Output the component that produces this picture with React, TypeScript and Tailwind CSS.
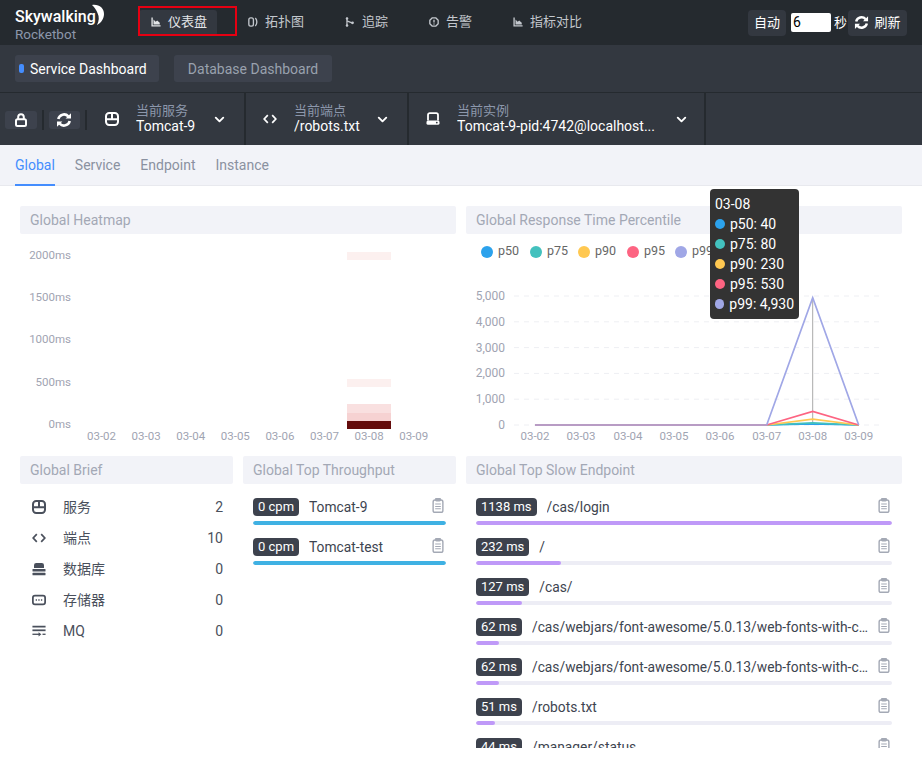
import { ReactNode } from 'react';
import { ChevronDown } from 'lucide-react';

type IconProps = { className?: string };

function ChartIcon({ className }: IconProps) {
  return (
    <svg viewBox="0 0 12 12" className={className} fill="currentColor">
      <path d="M0.5 0.5h1.6v9.4h9.4v1.6h-11z" />
      <path d="M3 3l2.6 2.6 1.8-1.3 3.100 2.500v2.200H3z" />
    </svg>
  );
}

function TopologyIcon({ className }: IconProps) {
  return (
    <svg viewBox="0 0 12 12" className={className} fill="none" stroke="currentColor" strokeWidth="1.6">
      <rect x="1" y="1" width="5.5" height="10" rx="2.2" />
      <path d="M8.8 1.200c2.400 2.500 2.400 7.100 0 9.600" />
    </svg>
  );
}

function TraceIcon({ className }: IconProps) {
  return (
    <svg viewBox="0 0 12 12" className={className} fill="currentColor">
      <path d="M1.600 1h1.500v10H1.600z" />
      <path d="M2.500 4l6 2.400-.5 1.300-6-2.400z" />
      <circle cx="2.400" cy="1.800" r="1.500" />
      <circle cx="2.400" cy="10.200" r="1.500" />
      <circle cx="9" cy="7" r="1.700" />
    </svg>
  );
}

function AlarmIcon({ className }: IconProps) {
  return (
    <svg viewBox="0 0 12 12" className={className} fill="none" stroke="currentColor" strokeWidth="1.6">
      <path d="M4 1h4l3 3v4l-3 3H4L1 8V4z" strokeLinejoin="round" />
      <path d="M6 3.200v3.400M6 7.700v1.200" />
    </svg>
  );
}

function ReloadIcon({ className }: IconProps) {
  return (
    <svg viewBox="0 0 16 16" className={className} fill="none" stroke="currentColor" strokeWidth="2.6">
      <path d="M2.300 7a5.800 5.800 0 0 1 10-2.600" />
      <path d="M13.700 9a5.800 5.800 0 0 1-10 2.600" />
      <path d="M15 1.200v5.400H9.600z" fill="currentColor" stroke="none" />
      <path d="M1 14.800V9.400h5.400z" fill="currentColor" stroke="none" />
    </svg>
  );
}

function LockIcon({ className }: IconProps) {
  return (
    <svg viewBox="0 0 12 14" className={className} fill="none" stroke="currentColor" strokeWidth="2">
      <path d="M3.200 6.500V4a2.800 2.800 0 0 1 5.600 0v2.500" />
      <rect x="1" y="6.200" width="10" height="6.800" rx="1.500" />
    </svg>
  );
}

function ServiceIcon({ className }: IconProps) {
  return (
    <svg viewBox="0 0 14 14" className={className} fill="none" stroke="currentColor" strokeWidth="2">
      <rect x="1" y="1" width="12" height="12" rx="3.200" />
      <path d="M1 7.200h12M7 1v6" />
    </svg>
  );
}

function EndpointIcon({ className }: IconProps) {
  return (
    <svg viewBox="0 0 14 14" className={className} fill="none" stroke="currentColor" strokeWidth="1.7">
      <path d="M4.800 3.200L1.200 7l3.600 3.800M9.200 3.200L12.800 7l-3.600 3.800" />
    </svg>
  );
}

function InstanceIcon({ className }: IconProps) {
  return (
    <svg viewBox="0 0 14 14" className={className} fill="none" stroke="currentColor" strokeWidth="1.800">
      <path d="M2 8.500V3a1.800 1.800 0 0 1 1.800-1.800h6.400A1.800 1.800 0 0 1 12 3v5.500" />
      <rect x="0.500" y="8.400" width="13" height="4.400" rx="1.600" fill="currentColor" stroke="none" />
      <circle cx="10.800" cy="10.600" r="0.900" fill="#333840" stroke="none" />
    </svg>
  );
}

function DatabaseIcon({ className }: IconProps) {
  return (
    <svg viewBox="0 0 14 14" className={className} fill="currentColor">
      <path d="M2 6V3.200A2.200 2.200 0 0 1 4.200 1h5.600A2.200 2.200 0 0 1 12 3.200V6z" />
      <rect x="0.500" y="7" width="13" height="2.500" rx="0.600" />
      <rect x="0.500" y="10.800" width="13" height="2.500" rx="0.600" />
    </svg>
  );
}

function CacheIcon({ className }: IconProps) {
  return (
    <svg viewBox="0 0 16 14" className={className} fill="none" stroke="currentColor" strokeWidth="2">
      <rect x="1" y="2" width="14" height="10" rx="2.400" />
      <path d="M4.200 7h1.500M7.200 7h1.500M10.200 7h1.500" strokeWidth="1.800" />
    </svg>
  );
}

function MqIcon({ className }: IconProps) {
  return (
    <svg viewBox="0 0 16 14" className={className} fill="currentColor">
      <rect x="0.500" y="1" width="15" height="2" />
      <rect x="0.500" y="5.200" width="15" height="2" />
      <rect x="0.500" y="10" width="8" height="1.500" />
      <path d="M7.500 8.300l3.200 2.450-3.200 2.450z" />
      <rect x="12" y="10" width="3.500" height="1.500" />
    </svg>
  );
}

function ClipboardIcon({ className }: IconProps) {
  return (
    <svg viewBox="0 0 12 16" className={className} fill="none" stroke="currentColor" strokeWidth="1.5">
      <rect x="0.800" y="2.200" width="10.400" height="13" rx="2" />
      <rect x="3.500" y="0.600" width="5" height="2.400" rx="0.800" fill="currentColor" />
      <path d="M3 6.500h6M3 9h6M3 11.500h6" strokeWidth="1.100" />
    </svg>
  );
}

const navItems = [
  { label: '仪表盘', icon: ChartIcon, className: 'ml-px mr-[21px] w-[78px] rounded-[3px] bg-[#333840] pl-3 text-[#e3e5e8]' },
  { label: '拓扑图', icon: TopologyIcon, className: 'w-[97px] pl-2.5' },
  { label: '追踪', icon: TraceIcon, className: 'w-[84px] pl-2.5' },
  { label: '告警', icon: AlarmIcon, className: 'w-[84px] pl-2.5' },
  { label: '指标对比', icon: ChartIcon, className: 'w-[90px] pl-2.5' },
];

const selectors = [
  { label: '当前服务', value: 'Tomcat-9', icon: ServiceIcon, className: 'w-[159px] pl-[18px]', chevron: 'mr-[17px]' },
  { label: '当前端点', value: '/robots.txt', icon: EndpointIcon, className: 'w-[163px] pl-[17px]', chevron: 'mr-[17px]' },
  { label: '当前实例', value: 'Tomcat-9-pid:4742@localhost...', icon: InstanceIcon, className: 'w-[297px] pl-[17px]', chevron: 'mr-[15px]' },
];

const brief = [
  { label: '服务', value: 2, icon: ServiceIcon },
  { label: '端点', value: 10, icon: EndpointIcon },
  { label: '数据库', value: 0, icon: DatabaseIcon },
  { label: '存储器', value: 0, icon: CacheIcon },
  { label: 'MQ', value: 0, icon: MqIcon },
];

const throughput = [
  { value: '0 cpm', name: 'Tomcat-9' },
  { value: '0 cpm', name: 'Tomcat-test' },
];

const slowEndpoints = [
  { value: '1138 ms', name: '/cas/login', pct: 100 },
  { value: '232 ms', name: '/', pct: 20.4 },
  { value: '127 ms', name: '/cas/', pct: 11 },
  { value: '62 ms', name: '/cas/webjars/font-awesome/5.0.13/web-fonts-with-css/webfonts/fa-solid-900.woff2', pct: 5.5 },
  { value: '62 ms', name: '/cas/webjars/font-awesome/5.0.13/web-fonts-with-css/webfonts/fa-solid-900.woff', pct: 5.5 },
  { value: '51 ms', name: '/robots.txt', pct: 4.5 },
  { value: '44 ms', name: '/manager/status', pct: 3.9 },
];

const days = ['03-02', '03-03', '03-04', '03-05', '03-06', '03-07', '03-08', '03-09'];

const legend = [
  { name: 'p50', color: '#2ca2ec', x: 21 },
  { name: 'p75', color: '#43c1be', x: 70 },
  { name: 'p90', color: '#ffc851', x: 118 },
  { name: 'p95', color: '#fd6482', x: 167 },
  { name: 'p99', color: '#a0a7e6', x: 215 },
];

const tooltipRows = [
  { name: 'p50', value: '40', color: '#2ca2ec' },
  { name: 'p75', value: '80', color: '#43c1be' },
  { name: 'p90', value: '230', color: '#ffc851' },
  { name: 'p95', value: '530', color: '#fd6482' },
  { name: 'p99', value: '4,930', color: '#a0a7e6' },
];

function PanelTitle({ children }: { children: ReactNode }) {
  return (
    <div className="h-7 shrink-0 rounded-[2px] bg-[#f2f3f8] px-2.5 text-sm leading-7 text-[#a3a8b5]">{children}</div>
  );
}

function Heatmap() {
  const yLabels = [
    { text: '2000ms', y: 21 },
    { text: '1500ms', y: 63 },
    { text: '1000ms', y: 105 },
    { text: '500ms', y: 148 },
    { text: '0ms', y: 190 },
  ];
  const cells = [
    { y: 18, h: 8, fill: '#fcf0ef' },
    { y: 145, h: 8, fill: '#fcf0ef' },
    { y: 170, h: 9, fill: '#f9e0e0' },
    { y: 179, h: 8, fill: '#f6d2d2' },
    { y: 187, h: 8, fill: '#640c0c' },
  ];
  return (
    <svg width="436" height="222" className="block" fontSize="11.5" fill="#9fa4b2">
      {yLabels.map((l) => (
        <text key={l.text} x="51" y={l.y + 4} textAnchor="end">{l.text}</text>
      ))}
      {cells.map((c) => (
        <rect key={c.y} x="327" y={c.y} width="44" height={c.h} fill={c.fill} />
      ))}
      {days.map((d, i) => (
        <text key={d} x={81.5 + i * 44.6} y="206" textAnchor="middle">{d}</text>
      ))}
    </svg>
  );
}

function PercentileChart() {
  const xs = [69, 115, 162, 208, 254, 300.7, 346.7, 392.7];
  const yAt = (v: number) => 191 - (v * 129) / 5000;
  const series = [
    { color: '#2ca2ec', peak: 40 },
    { color: '#43c1be', peak: 80 },
    { color: '#ffc851', peak: 230 },
    { color: '#fd6482', peak: 530 },
    { color: '#a0a7e6', peak: 4930 },
  ];
  return (
    <svg width="436" height="222" className="block" fontSize="11.5" fill="#9fa4b2">
      {legend.map((l) => (
        <g key={l.name}>
          <circle cx={l.x} cy="18" r="6" fill={l.color} />
          <text x={l.x + 11} y="21" fontSize="12.5" fill="#666666">{l.name}</text>
        </g>
      ))}
      {[0, 1000, 2000, 3000, 4000, 5000].map((v) => (
        <g key={v}>
          <line x1="48" x2="416" y1={yAt(v)} y2={yAt(v)} stroke="#eeeff3" strokeDasharray="5 5" />
          <text x="39" y={yAt(v) + 4} textAnchor="end" fontSize="12">{v.toLocaleString('en-US')}</text>
        </g>
      ))}
      {days.map((d, i) => (
        <text key={d} x={xs[i]} y="206" textAnchor="middle">{d}</text>
      ))}
      <line x1={xs[6]} x2={xs[6]} y1={yAt(4930)} y2={yAt(0)} stroke="#a9a9a9" />
      {series.map((s) => (
        <polyline
          key={s.color}
          points={`${xs[0]},${yAt(0)} ${xs[5]},${yAt(0)} ${xs[6]},${yAt(s.peak)} ${xs[7]},${yAt(0)}`}
          fill="none"
          stroke={s.color}
          strokeWidth="1.7"
        />
      ))}
      <line x1={xs[0]} x2={xs[5]} y1={yAt(0)} y2={yAt(0)} stroke="#b89cc4" strokeWidth="2" />
    </svg>
  );
}

function BarRow({ value, name, pct, color }: { value: string; name: string; pct: number; color: string }) {
  return (
    <div className="mb-[13px] h-[27px]">
      <div className="flex h-[18px] items-center">
        <span className="shrink-0 rounded-[4px] bg-[#3d424d] px-[5px] text-[13px] leading-[18px] text-white">{value}</span>
        <span className="ml-2.5 min-w-0 flex-1 truncate text-[13.8px] leading-[18px] text-[#3d444f]">{name}</span>
        <ClipboardIcon className="mx-0.5 mb-1 ml-2 h-[15px] w-3 shrink-0 text-[#a4a9b5]" />
      </div>
      <div className="mt-[5px] h-1 overflow-hidden rounded-full bg-[#ededf5]">
        <div className="h-full rounded-full" style={{ width: `${pct}%`, backgroundColor: color }} />
      </div>
    </div>
  );
}

export default function App() {
  return (
    <div className="h-[780px] w-[922px] overflow-hidden bg-white font-['Roboto','Noto_Sans_CJK_SC',sans-serif]">
      <header className="flex h-[45px] items-center bg-[#252a2f]">
        <div className="w-[138px] shrink-0 pl-[15px] pt-[3px]">
          <div className="relative h-[21px] w-[92px] whitespace-nowrap text-[16px] font-medium leading-[21px] text-white">
            Skywalking
            <svg viewBox="0 0 14 22" className="absolute -top-0.5 left-[76px] h-[22px] w-3.5" fill="currentColor">
              <path d="M1 1c7-1 12 3 12 9 0 4-2.500 9-7 11 2-4 2.500-8 .5-12C5.300 6 3.500 3 1 1z" />
            </svg>
          </div>
          <div className="text-[13.5px] leading-[15px] text-[#8c97ab]">Rocketbot</div>
        </div>
        <nav className="relative flex h-full items-center">
          {navItems.map((item) => (
            <div key={item.label} className={`flex h-[26px] items-center pb-0.5 text-[13px] text-[#c3c7cd] ${item.className}`}>
              <item.icon className="mr-[7px] h-2.5 w-2.5 shrink-0" />
              <span>{item.label}</span>
            </div>
          ))}
          <div className="absolute left-0 top-1.5 h-[30px] w-[99px] border-2 border-[#e60012]" />
        </nav>
        <div className="ml-auto flex items-center pr-[15px] text-[13px] text-white">
          <div className="flex h-[26px] w-[38px] items-center justify-center rounded-[4px] bg-[#333840]">自动</div>
          <input
            readOnly
            value="6"
            className="ml-[5px] h-[19px] w-10 rounded-[2px] bg-white pl-0.5 text-[14px] leading-[19px] text-black outline-none"
          />
          <span className="ml-[3px] w-3.5">秒</span>
          <div className="flex h-[26px] w-[59px] items-center justify-center gap-[5px] rounded-[4px] bg-[#333840]">
            <ReloadIcon className="h-[15px] w-[15px]" />
            刷新
          </div>
        </div>
      </header>

      <div className="flex h-[47px] items-center gap-[15px] bg-[#333840] pl-[15px]">
        <div className="flex h-[27px] w-[144px] items-center rounded-[3px] bg-[#3d424d] pl-1 text-sm text-white">
          <span className="mr-1.5 h-[9px] w-[5px] rounded-[2px] bg-[#448dfe]" />
          Service Dashboard
        </div>
        <div className="flex h-[27px] w-[158px] items-center justify-center rounded-[3px] bg-[#3d424d] text-sm text-[#99a1ae]">
          Database Dashboard
        </div>
      </div>

      <div className="flex h-[53px] border-t border-[#252a2f] bg-[#333840]">
        <div className="flex w-[87px] shrink-0 items-center pl-[5px] pt-0.5">
          <div className="flex h-[18px] w-8 items-center justify-center rounded-[3px] bg-[#3d424d] text-white">
            <LockIcon className="h-3.5 w-3" />
          </div>
          <span className="mx-[5px] h-5 w-0.5 bg-[#252a2f]" />
          <div className="flex h-[18px] w-8 items-center justify-center rounded-[3px] bg-[#3d424d] text-white">
            <ReloadIcon className="h-4 w-4" />
          </div>
          <span className="ml-[5px] h-5 w-0.5 bg-[#252a2f]" />
        </div>
        {selectors.map((s) => (
          <div key={s.label} className={`flex shrink-0 items-center border-r-2 border-[#252a2f] ${s.className}`}>
            <s.icon className="mr-[17px] h-3.5 w-3.5 shrink-0 text-white" />
            <div className="-mt-px min-w-0 flex-1">
              <div className="text-[13px] leading-[14px] text-[#8c97ab]">{s.label}</div>
              <div className="truncate text-sm leading-4 text-white">{s.value}</div>
            </div>
            <ChevronDown className={`h-[15px] w-[15px] shrink-0 text-white ${s.chevron}`} strokeWidth={3} />
          </div>
        ))}
      </div>

      <div className="flex h-[41px] gap-5 border-b border-[#e8e9ee] bg-[#f2f3f8] pl-[15px] text-sm leading-10 text-[#8a91a0]">
        <div className="h-[41px] border-b-2 border-[#448dfe] text-[#448dfe]">Global</div>
        <div>Service</div>
        <div>Endpoint</div>
        <div>Instance</div>
      </div>

      <main className="relative grid h-[594px] grid-cols-[213px_213px_436px] grid-rows-[250px_292px] gap-x-2.5 overflow-hidden px-5 pt-5">
        <section className="col-span-2">
          <PanelTitle>Global Heatmap</PanelTitle>
          <Heatmap />
        </section>
        <section>
          <PanelTitle>Global Response Time Percentile</PanelTitle>
          <PercentileChart />
        </section>

        <section>
          <PanelTitle>Global Brief</PanelTitle>
          <div className="pt-[7px]">
            {brief.map((b) => (
              <div key={b.label} className="flex h-[31px] items-center pl-3 pr-2.5 text-sm text-[#4a505c]">
                <b.icon className="mr-[17px] h-3.5 w-3.5 shrink-0 text-[#4a505c]" />
                <span>{b.label}</span>
                <span className="ml-auto">{b.value}</span>
              </div>
            ))}
          </div>
        </section>
        <section>
          <PanelTitle>Global Top Throughput</PanelTitle>
          <div className="px-2.5 pt-3.5">
            {throughput.map((t) => (
              <BarRow key={t.name} value={t.value} name={t.name} pct={100} color="#3fb1e3" />
            ))}
          </div>
        </section>
        <section>
          <PanelTitle>Global Top Slow Endpoint</PanelTitle>
          <div className="h-[264px] overflow-hidden px-2.5 pt-3.5">
            {slowEndpoints.map((e, i) => (
              <BarRow key={i} value={e.value} name={e.name} pct={e.pct} color="#bf99f8" />
            ))}
          </div>
        </section>

        <div className="absolute left-[710px] top-[3px] h-[130px] w-[89px] whitespace-nowrap rounded-[4px] bg-[#333333] px-[5px] pt-[5px] text-sm leading-5 text-white">
          <div>03-08</div>
          {tooltipRows.map((r) => (
            <div key={r.name} className="flex items-center">
              <span className="mr-[5px] h-2.5 w-2.5 rounded-full" style={{ backgroundColor: r.color }} />
              {r.name}: {r.value}
            </div>
          ))}
        </div>
      </main>
    </div>
  );
}
